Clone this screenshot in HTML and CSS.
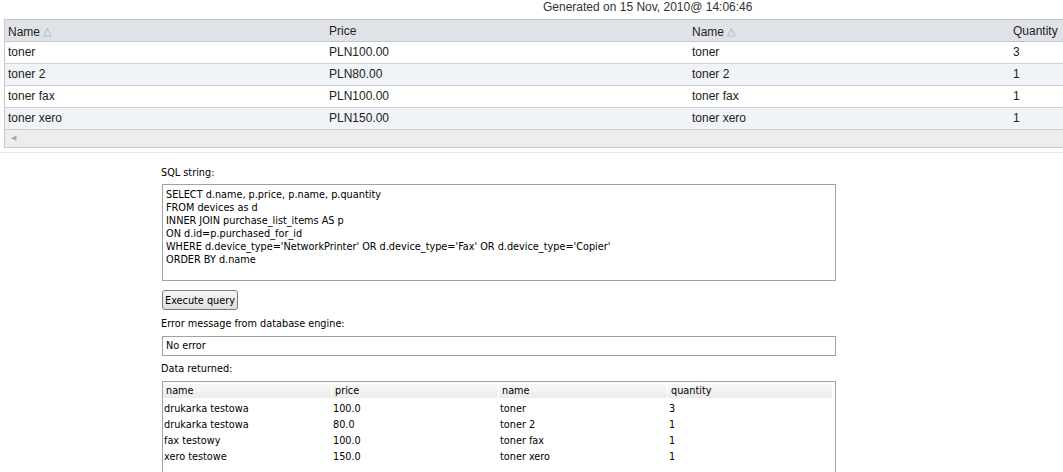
FILE: index.html
```html
<!DOCTYPE html>
<html lang="en">
<head>
<meta charset="utf-8">
<title>SQL query</title>
<link rel="stylesheet" href="styles.css">
</head>
<body>
<div class="generated">Generated on 15 Nov, 2010@ 14:06:46</div>
<div class="grid">
  <div class="grid-row grid-head">
    <div class="cell">Name <span class="sort">&#9651;</span></div>
    <div class="cell">Price</div>
    <div class="cell">Name <span class="sort">&#9651;</span></div>
    <div class="cell">Quantity</div>
  </div>
  <div class="grid-row">
    <div class="cell">toner</div><div class="cell">PLN100.00</div><div class="cell">toner</div><div class="cell">3</div>
  </div>
  <div class="grid-row alt">
    <div class="cell">toner 2</div><div class="cell">PLN80.00</div><div class="cell">toner 2</div><div class="cell">1</div>
  </div>
  <div class="grid-row">
    <div class="cell">toner fax</div><div class="cell">PLN100.00</div><div class="cell">toner fax</div><div class="cell">1</div>
  </div>
  <div class="grid-row alt">
    <div class="cell">toner xero</div><div class="cell">PLN150.00</div><div class="cell">toner xero</div><div class="cell">1</div>
  </div>
  <div class="scroll-row"><span class="arrow">&#9664;</span></div>
</div>
<div class="divider"></div>

<div class="panel">
  <div class="label label-first">SQL string:</div>
  <textarea class="sql" readonly>SELECT d.name, p.price, p.name, p.quantity
FROM devices as d
INNER JOIN purchase_list_items AS p
ON d.id=p.purchased_for_id
WHERE d.device_type='NetworkPrinter' OR d.device_type='Fax' OR d.device_type='Copier'
ORDER BY d.name</textarea>
  <div class="actions"><button class="btn" type="button">Execute query</button></div>
  <div class="label">Error message from database engine:</div>
  <div class="field">No error</div>
  <div class="label label-data">Data returned:</div>
  <div class="data">
    <div class="data-row data-head">
      <div class="dcell">name</div><div class="dcell">price</div><div class="dcell">name</div><div class="dcell">quantity</div>
    </div>
    <div class="data-row"><div class="dcell">drukarka testowa</div><div class="dcell">100.0</div><div class="dcell">toner</div><div class="dcell">3</div></div>
    <div class="data-row"><div class="dcell">drukarka testowa</div><div class="dcell">80.0</div><div class="dcell">toner 2</div><div class="dcell">1</div></div>
    <div class="data-row"><div class="dcell">fax testowy</div><div class="dcell">100.0</div><div class="dcell">toner fax</div><div class="dcell">1</div></div>
    <div class="data-row"><div class="dcell">xero testowe</div><div class="dcell">150.0</div><div class="dcell">toner xero</div><div class="dcell">1</div></div>
  </div>
</div>
</body>
</html>
```

FILE: styles.css
```css
html, body {
  margin: 0;
  padding: 0;
  overflow: hidden;
  background: #ffffff;
}

.generated {
  height: 19px;
  padding-left: 543px;
  font: 12px/14px "Liberation Sans", Arial, sans-serif;
  color: #333333;
}

.grid {
  margin-left: 4px;
  border-left: 1px solid #c4c8cc;
  border-top: 1px solid #c4c8cc;
  font: 12px/21px "Liberation Sans", Arial, sans-serif;
  color: #222222;
}

.grid-row {
  display: grid;
  grid-template-columns: 321px 363px 321px 1fr;
  height: 21px;
  border-bottom: 1px solid #cdd1d5;
  background: #ffffff;
}

.grid-row.alt {
  background: #f0f3f7;
}

.grid-head {
  background: #dfe3e8;
  border-bottom-color: #c4c8cc;
  color: #1e1e1e;
  line-height: 22px;
}

.cell {
  padding-left: 3px;
  white-space: nowrap;
  overflow: hidden;
}

.sort {
  font-size: 11px;
  color: #a3a9b0;
  vertical-align: 1px;
}

.scroll-row {
  height: 17px;
  background: #ededed;
  border-bottom: 1px solid #c4c8cc;
  display: flex;
  align-items: center;
}

.arrow {
  margin-left: 6px;
  margin-top: -2px;
  font-size: 7px;
  color: #a8a8a8;
}

.divider {
  margin-top: 4px;
  border-top: 1px solid #e8e8e8;
}

.panel {
  margin-left: 161px;
  width: 675px;
  display: flex;
  flex-direction: column;
  font-family: "DejaVu Sans Condensed", "DejaVu Sans", sans-serif;
  font-size: 10.8px;
  color: #000000;
}

.label {
  line-height: 13px;
  margin-top: 7px;
}

.label-first {
  margin-top: 13px;
}

.label-data {
  margin-top: 6px;
}

.sql {
  margin: 5px 0 0 1px;
  width: 674px;
  height: 97px;
  box-sizing: border-box;
  border: 1px solid #a2a2a2;
  padding: 3px 3px;
  font: inherit;
  line-height: 13px;
  resize: none;
  overflow: hidden;
  color: #000000;
  background: #ffffff;
  outline: none;
}

.actions {
  margin: 9px 0 0 1px;
  display: flex;
}

.btn {
  width: 76px;
  height: 20px;
  padding: 0;
  border: 1px solid #7a7a7a;
  border-radius: 3px;
  background: linear-gradient(#f6f6f6, #dedede);
  font: inherit;
  color: #000000;
}

.field {
  margin: 6px 0 0 1px;
  width: 674px;
  height: 20px;
  box-sizing: border-box;
  border: 1px solid #a2a2a2;
  padding-left: 3px;
  line-height: 18px;
}

.data {
  margin: 6px 0 0 1px;
  width: 674px;
  height: 110px;
  box-sizing: border-box;
  border: 1px solid #a2a2a2;
  padding-top: 2px;
}

.data-row {
  display: grid;
  grid-template-columns: 169px 167px 169px 1fr;
  height: 16px;
  line-height: 16px;
}

.data-head {
  height: 14px;
  line-height: 14px;
  margin-bottom: 3px;
  margin-right: 2px;
}

.data-head .dcell {
  padding-left: 3px;
  background: linear-gradient(#f8f8f8, #ebebeb);
  border-right: 1px solid #ffffff;
}

.dcell {
  padding-left: 1px;
  white-space: nowrap;
}
```
